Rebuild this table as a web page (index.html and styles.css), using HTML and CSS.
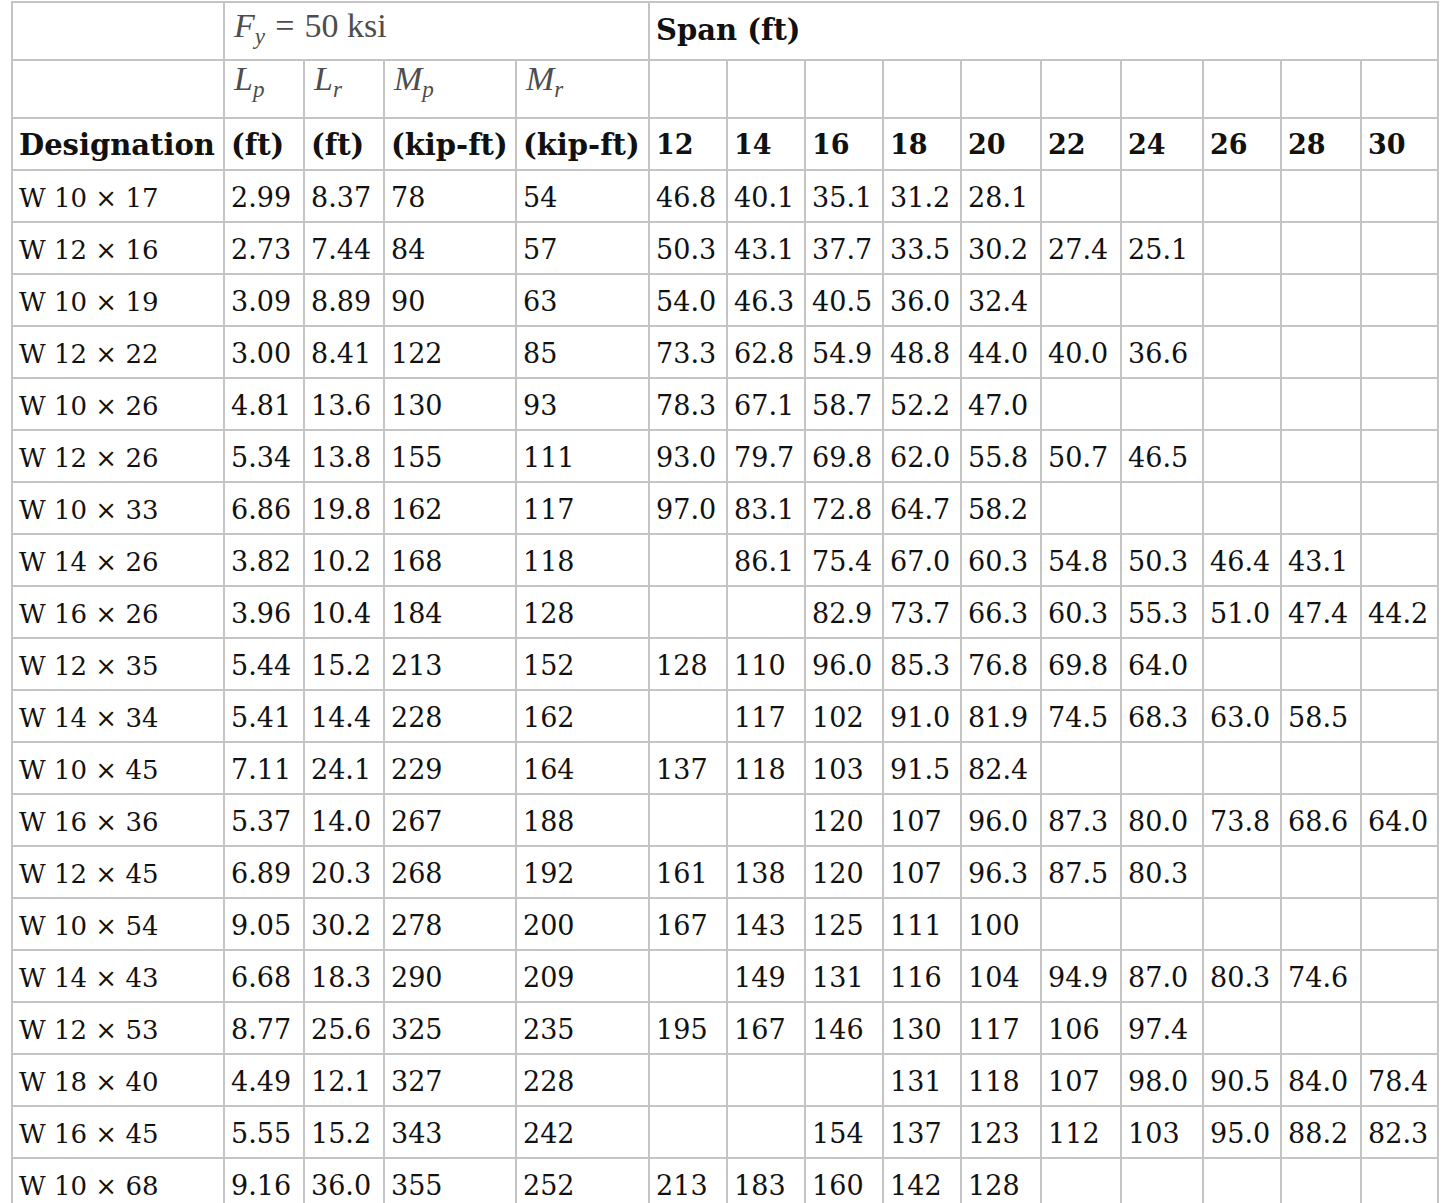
FILE: index.html
```html
<!DOCTYPE html>
<html lang="en">
<head>
<meta charset="utf-8">
<title>W-shape beam selection table</title>
<link rel="stylesheet" href="styles.css">
</head>
<body>
<table class="beams">
  <colgroup>
    <col class="w212"><col class="w80"><col class="w80"><col class="w132"><col class="w133">
    <col class="w78"><col class="w78"><col class="w78"><col class="w78"><col class="w80">
    <col class="w80"><col class="w82"><col class="w78"><col class="w80"><col class="w77">
  </colgroup>
  <thead>
    <tr class="h1">
      <th></th>
      <th colspan="4" class="math"><i>F</i><sub><i>y</i></sub><span class="rel">=</span>50 ksi</th>
      <th colspan="10" class="span">Span (ft)</th>
    </tr>
    <tr class="h2">
      <th></th>
      <th class="math"><i>L</i><sub><i>p</i></sub></th>
      <th class="math"><i>L</i><sub><i>r</i></sub></th>
      <th class="math"><i>M</i><sub><i>p</i></sub></th>
      <th class="math"><i>M</i><sub><i>r</i></sub></th>
      <th></th><th></th><th></th><th></th><th></th><th></th><th></th><th></th><th></th><th></th>
    </tr>
    <tr class="h3">
      <th class="lbl">Designation</th><th class="lbl">(ft)</th><th class="lbl">(ft)</th><th class="lbl">(kip-ft)</th><th class="lbl">(kip-ft)</th>
      <th>12</th><th>14</th><th>16</th><th>18</th><th>20</th><th>22</th><th>24</th><th>26</th><th>28</th><th>30</th>
    </tr>
  </thead>
  <tbody>
    <tr><td>W 10 × 17</td><td>2.99</td><td>8.37</td><td>78</td><td>54</td><td>46.8</td><td>40.1</td><td>35.1</td><td>31.2</td><td>28.1</td><td></td><td></td><td></td><td></td><td></td></tr>
    <tr><td>W 12 × 16</td><td>2.73</td><td>7.44</td><td>84</td><td>57</td><td>50.3</td><td>43.1</td><td>37.7</td><td>33.5</td><td>30.2</td><td>27.4</td><td>25.1</td><td></td><td></td><td></td></tr>
    <tr><td>W 10 × 19</td><td>3.09</td><td>8.89</td><td>90</td><td>63</td><td>54.0</td><td>46.3</td><td>40.5</td><td>36.0</td><td>32.4</td><td></td><td></td><td></td><td></td><td></td></tr>
    <tr><td>W 12 × 22</td><td>3.00</td><td>8.41</td><td>122</td><td>85</td><td>73.3</td><td>62.8</td><td>54.9</td><td>48.8</td><td>44.0</td><td>40.0</td><td>36.6</td><td></td><td></td><td></td></tr>
    <tr><td>W 10 × 26</td><td>4.81</td><td>13.6</td><td>130</td><td>93</td><td>78.3</td><td>67.1</td><td>58.7</td><td>52.2</td><td>47.0</td><td></td><td></td><td></td><td></td><td></td></tr>
    <tr><td>W 12 × 26</td><td>5.34</td><td>13.8</td><td>155</td><td>111</td><td>93.0</td><td>79.7</td><td>69.8</td><td>62.0</td><td>55.8</td><td>50.7</td><td>46.5</td><td></td><td></td><td></td></tr>
    <tr><td>W 10 × 33</td><td>6.86</td><td>19.8</td><td>162</td><td>117</td><td>97.0</td><td>83.1</td><td>72.8</td><td>64.7</td><td>58.2</td><td></td><td></td><td></td><td></td><td></td></tr>
    <tr><td>W 14 × 26</td><td>3.82</td><td>10.2</td><td>168</td><td>118</td><td></td><td>86.1</td><td>75.4</td><td>67.0</td><td>60.3</td><td>54.8</td><td>50.3</td><td>46.4</td><td>43.1</td><td></td></tr>
    <tr><td>W 16 × 26</td><td>3.96</td><td>10.4</td><td>184</td><td>128</td><td></td><td></td><td>82.9</td><td>73.7</td><td>66.3</td><td>60.3</td><td>55.3</td><td>51.0</td><td>47.4</td><td>44.2</td></tr>
    <tr><td>W 12 × 35</td><td>5.44</td><td>15.2</td><td>213</td><td>152</td><td>128</td><td>110</td><td>96.0</td><td>85.3</td><td>76.8</td><td>69.8</td><td>64.0</td><td></td><td></td><td></td></tr>
    <tr><td>W 14 × 34</td><td>5.41</td><td>14.4</td><td>228</td><td>162</td><td></td><td>117</td><td>102</td><td>91.0</td><td>81.9</td><td>74.5</td><td>68.3</td><td>63.0</td><td>58.5</td><td></td></tr>
    <tr><td>W 10 × 45</td><td>7.11</td><td>24.1</td><td>229</td><td>164</td><td>137</td><td>118</td><td>103</td><td>91.5</td><td>82.4</td><td></td><td></td><td></td><td></td><td></td></tr>
    <tr><td>W 16 × 36</td><td>5.37</td><td>14.0</td><td>267</td><td>188</td><td></td><td></td><td>120</td><td>107</td><td>96.0</td><td>87.3</td><td>80.0</td><td>73.8</td><td>68.6</td><td>64.0</td></tr>
    <tr><td>W 12 × 45</td><td>6.89</td><td>20.3</td><td>268</td><td>192</td><td>161</td><td>138</td><td>120</td><td>107</td><td>96.3</td><td>87.5</td><td>80.3</td><td></td><td></td><td></td></tr>
    <tr><td>W 10 × 54</td><td>9.05</td><td>30.2</td><td>278</td><td>200</td><td>167</td><td>143</td><td>125</td><td>111</td><td>100</td><td></td><td></td><td></td><td></td><td></td></tr>
    <tr><td>W 14 × 43</td><td>6.68</td><td>18.3</td><td>290</td><td>209</td><td></td><td>149</td><td>131</td><td>116</td><td>104</td><td>94.9</td><td>87.0</td><td>80.3</td><td>74.6</td><td></td></tr>
    <tr><td>W 12 × 53</td><td>8.77</td><td>25.6</td><td>325</td><td>235</td><td>195</td><td>167</td><td>146</td><td>130</td><td>117</td><td>106</td><td>97.4</td><td></td><td></td><td></td></tr>
    <tr><td>W 18 × 40</td><td>4.49</td><td>12.1</td><td>327</td><td>228</td><td></td><td></td><td></td><td>131</td><td>118</td><td>107</td><td>98.0</td><td>90.5</td><td>84.0</td><td>78.4</td></tr>
    <tr><td>W 16 × 45</td><td>5.55</td><td>15.2</td><td>343</td><td>242</td><td></td><td></td><td>154</td><td>137</td><td>123</td><td>112</td><td>103</td><td>95.0</td><td>88.2</td><td>82.3</td></tr>
    <tr><td>W 10 × 68</td><td>9.16</td><td>36.0</td><td>355</td><td>252</td><td>213</td><td>183</td><td>160</td><td>142</td><td>128</td><td></td><td></td><td></td><td></td><td></td></tr>
  </tbody>
</table>
</body>
</html>
```

FILE: styles.css
```css
html, body {
  margin: 0;
  padding: 0;
  background: #ffffff;
}

body {
  padding: 1px 0 0 11px;
  font-family: "DejaVu Serif", "Liberation Serif", serif;
  color: #111111;
}

.beams {
  table-layout: fixed;
  width: 1428px;
  border-collapse: separate;
  border-spacing: 0;
  border-top: 2px solid #c4c4c4;
  border-left: 2px solid #c4c4c4;
  font-size: 27px;
}

.w212 { width: 212px; }
.w77 { width: 77px; }
.w78 { width: 78px; }
.w80 { width: 80px; }
.w82 { width: 82px; }
.w132 { width: 132px; }
.w133 { width: 133px; }

.beams th,
.beams td {
  box-sizing: border-box;
  border-right: 2px solid #c4c4c4;
  border-bottom: 2px solid #c4c4c4;
  padding: 0 0 0 6px;
  text-align: left;
  vertical-align: middle;
  white-space: nowrap;
  overflow: hidden;
  height: 52px;
  line-height: 30px;
}

.beams th {
  font-weight: bold;
}

.beams .h1 th,
.beams .h2 th {
  height: 58px;
  vertical-align: top;
  padding-top: 10px;
}

.beams .h1 th.span {
  font-size: 29px;
  padding-top: 12px;
}

.beams td {
  font-weight: normal;
  padding-top: 3px;
}

.beams td:first-child {
  font-size: 26px;
}

.beams .h3 th {
  padding-top: 2px;
}

.beams .h3 th.lbl {
  font-size: 29px;
}

.beams th.math {
  font-family: "Liberation Serif", "Times New Roman", serif;
  font-weight: normal;
  font-size: 34px;
  line-height: 34px;
  color: #4d4d4d;
  padding-left: 9px;
}

.beams .h1 th.math {
  padding-top: 6px;
}

.beams .h2 th.math {
  padding-top: 1px;
}

.math i {
  font-style: italic;
}

.math sub {
  font-size: 0.68em;
  vertical-align: -0.3em;
  line-height: 0;
}

.math .rel {
  margin: 0 0.3em;
}
```
